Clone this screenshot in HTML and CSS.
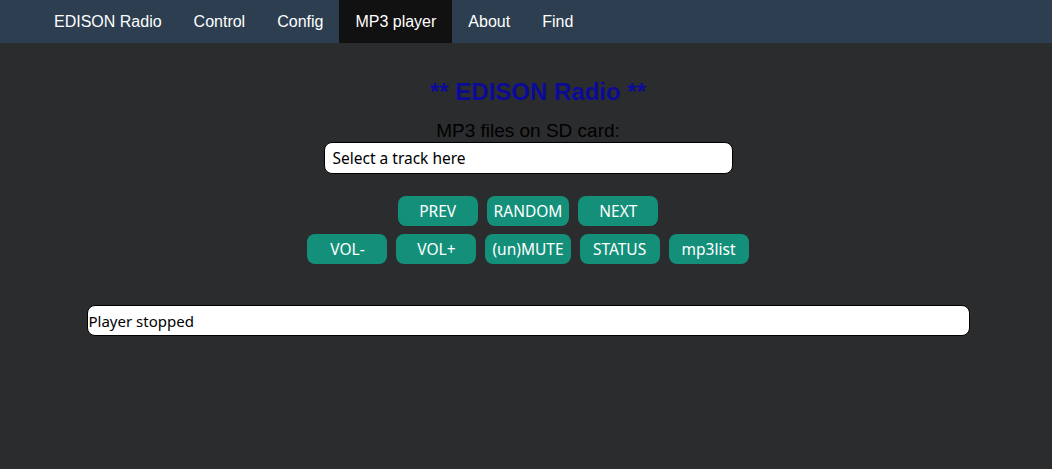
FILE: index.html
```html
<!DOCTYPE html>
<html>
<head>
<meta charset="utf-8">
<title>EDISON Radio</title>
<link rel="stylesheet" href="styles.css">
</head>
<body>
<nav class="topnav">
  <a class="nav-item" href="#">EDISON Radio</a>
  <a class="nav-item" href="#">Control</a>
  <a class="nav-item" href="#">Config</a>
  <a class="nav-item active" href="#">MP3 player</a>
  <a class="nav-item" href="#">About</a>
  <a class="nav-item" href="#">Find</a>
</nav>
<main class="content">
  <h2 class="title">** EDISON Radio **</h2>
  <div class="label">MP3 files on SD card:</div>
  <div class="select">Select a track here</div>
  <div class="btn-row first">
    <button class="btn">PREV</button>
    <button class="btn">RANDOM</button>
    <button class="btn">NEXT</button>
  </div>
  <div class="btn-row">
    <button class="btn">VOL-</button>
    <button class="btn">VOL+</button>
    <button class="btn">(un)MUTE</button>
    <button class="btn">STATUS</button>
    <button class="btn">mp3list</button>
  </div>
  <div class="status">Player stopped</div>
</main>
</body>
</html>
```
FILE: styles.css
```css
html, body {
  margin: 0;
  padding: 0;
}
body {
  background: #2b2c2e;
  font-family: "Liberation Sans", Arial, sans-serif;
  width: 1052px;
  height: 469px;
  overflow: hidden;
}
.topnav {
  display: flex;
  height: 43px;
  background: #2c3e50;
  padding-left: 38px;
}
.nav-item {
  display: flex;
  align-items: center;
  padding: 0 16px;
  color: #ffffff;
  text-decoration: none;
  font-size: 16px;
}
.nav-item.active {
  background: #111111;
}
.content {
  display: flex;
  flex-direction: column;
  align-items: center;
  padding-left: 4px;
}
.title {
  margin: 35px 0 0 20px;
  font-size: 24px;
  line-height: 28px;
  font-weight: bold;
  color: #0b0b98;
}
.label {
  margin-top: 14px;
  font-size: 19px;
  line-height: 22px;
  color: #000000;
}
.select {
  box-sizing: border-box;
  width: 409px;
  height: 32px;
  background: #ffffff;
  border: 1px solid #000000;
  border-radius: 8px;
  padding: 0 8px;
  display: flex;
  align-items: center;
  font-family: "Noto Sans", "Open Sans", sans-serif;
  font-size: 15.5px;
  color: #000;
}
.btn-row {
  display: flex;
  gap: 9px;
  margin-top: 8px;
}
.btn-row.first {
  margin-top: 22px;
}
.btn {
  box-sizing: border-box;
  min-width: 80px;
  height: 30px;
  padding: 0 7px;
  background: #14907a;
  color: #ffffff;
  border: none;
  border-radius: 8px;
  font-family: "Noto Sans", "Open Sans", sans-serif;
  font-size: 15.5px;
}
.status {
  box-sizing: border-box;
  width: 883px;
  height: 31px;
  margin-top: 41px;
  background: #ffffff;
  border: 1px solid #000000;
  border-radius: 8px;
  padding: 0 1px;
  display: flex;
  align-items: center;
  font-family: "Noto Sans", "Open Sans", sans-serif;
  font-size: 15px;
  color: #000;
}
```
